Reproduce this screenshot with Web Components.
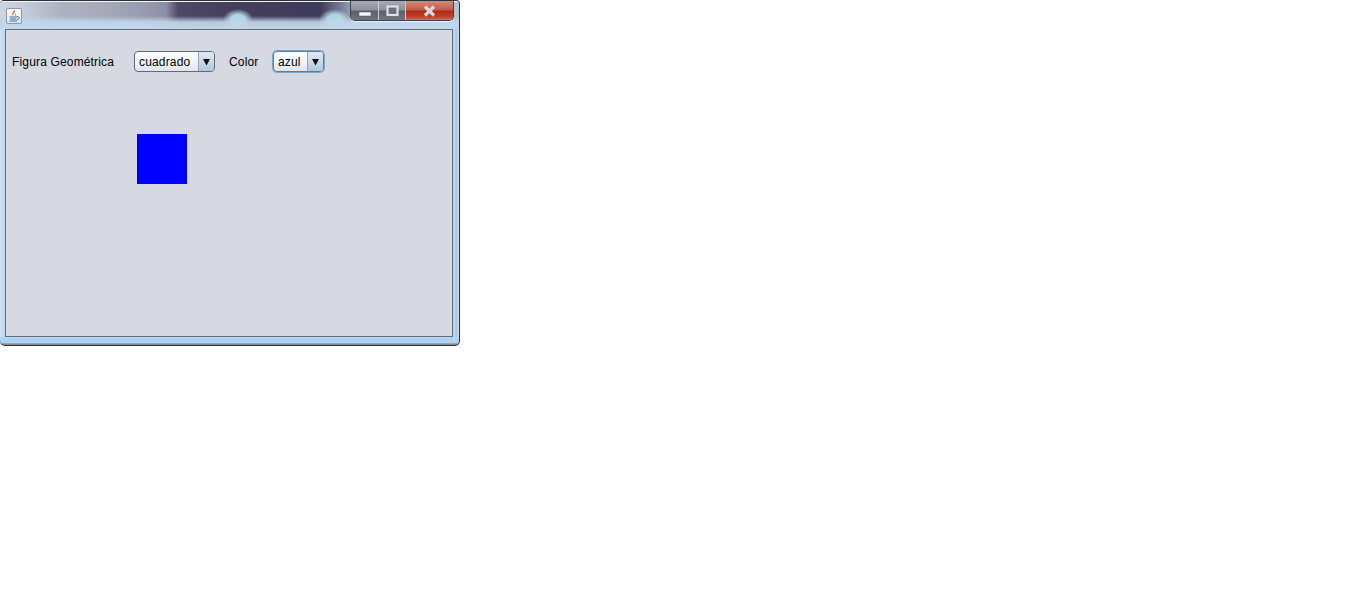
<!DOCTYPE html>
<html>
<head>
<meta charset="utf-8">
<title>Figura</title>
<style>
  html, body { margin: 0; background: #fff; }
  body { font-family: "Liberation Sans", Arial, sans-serif; font-size: 12px; letter-spacing: .16px; color: #000; }
</style>
</head>
<body>
<app-window>
  <combo-row>
    <span class="lbl" slot="first-label">Figura Geométrica</span>
    <combo-box slot="first" value="cuadrado" style="--combo-width:81px"></combo-box>
    <span class="lbl" slot="second-label">Color</span>
    <combo-box slot="second" value="azul" focused style="--combo-width:51px"></combo-box>
  </combo-row>
  <shape-canvas></shape-canvas>
</app-window>

<script>
class WindowButtons extends HTMLElement {
  constructor() {
    super();
    this.shadowDOM = this.attachShadow({ mode: "open" });
  }

  connectedCallback() {
    this.shadowDOM.innerHTML = `
      <style>
        :host {
          display: flex;
          width: 104px;
          height: 20px;
          box-sizing: border-box;
          border: 1px solid #3d4250;
          border-top: 0;
          border-radius: 0 0 5px 5px;
          overflow: hidden;
          box-shadow: 0 1px 0 rgba(255,255,255,.65);
        }
        .btn {
          display: flex;
          align-items: center;
          justify-content: center;
          box-sizing: border-box;
          height: 100%;
          background: linear-gradient(#a8aab4 0, #8f919d 45%, #5e606d 55%, #6f7280 100%);
        }
        .min { width: 28px; border-right: 1px solid #c9ccd6; }
        .max { width: 27px; border-right: 1px solid #c9ccd6; }
        .close { flex: 1; background: linear-gradient(#d08a7b 0, #c65c46 45%, #ad2e18 55%, #c24027 85%, #cf7660 100%); }
        svg { display: block; }
      </style>
      <div class="btn min">
        <svg width="12" height="12" viewBox="0 0 12 12"><rect x="0" y="7" width="12" height="4" fill="#f4f5f7" stroke="#4a4d5c" stroke-width=".5"/></svg>
      </div>
      <div class="btn max">
        <svg width="13" height="12" viewBox="0 0 13 12"><rect x="1.5" y="1.5" width="10" height="8.5" fill="#6d7080" stroke="#dfe1e7" stroke-width="2.2"/></svg>
      </div>
      <div class="btn close">
        <svg width="15" height="12" viewBox="0 0 15 12"><path d="M3 1.5 L12 10.5 M12 1.5 L3 10.5" stroke="#dcd9d8" stroke-width="3.2" fill="none"/></svg>
      </div>`;
  }
}

class AppWindow extends HTMLElement {
  constructor() {
    super();
    this.shadowDOM = this.attachShadow({ mode: "open" });
  }

  connectedCallback() {
    this.shadowDOM.innerHTML = `
      <style>
        :host {
          display: flex;
          flex-direction: column;
          box-sizing: border-box;
          width: 460px;
          height: 346px;
          padding: 0 6px 8px 5px;
          border: 1px solid #2c3038;
          border-width: 1px 1px 1px 0;
          border-radius: 4px 4px 5px 5px;
          background:
            linear-gradient(#b7d6f1 0, #a7cff3 5px, #c9d6df 6px, #6f7377 7px, #a3a5a7 8px) bottom / 100% 8px no-repeat,
            linear-gradient(90deg, #cfe2f2 0, #bcd7ef 5px, transparent 5px) left / 5px 100% no-repeat,
            linear-gradient(90deg, #c9d5df 0, #a9c8e6 4px, #cfe4f8 6px) right / 6px 100% no-repeat,
            #c4d8ea;
          overflow: hidden;
        }
        .title {
          display: flex;
          align-items: flex-start;
          justify-content: space-between;
          height: 28px;
          margin: 0 -6px 0 -5px;
          padding: 0 6px;
          flex: none;
          border-top: 1px solid #f2f4f7;
          box-sizing: border-box;
          background:
            linear-gradient(rgba(194,215,235,0) 0, rgba(194,215,235,0) 52%, rgba(194,215,235,.9) 74%, #c0d7ec 100%),
            radial-gradient(ellipse 15px 10px at 238px 17px, #b0d4e4 0, #b0d4e4 45%, rgba(176,212,228,0) 100%),
            radial-gradient(ellipse 16px 10px at 335px 17px, #b0d4e4 0, #b0d4e4 45%, rgba(176,212,228,0) 100%),
            linear-gradient(90deg, #ccd5e0 0, #c4ccd9 24px, #aeb3c2 60px, #a6aabb 100px, #9a9db1 140px, #8e8ea6 166px, #4f4966 178px, #443f5d 230px, #3f3b5a 320px, #7b7e96 342px, #b0c4d4 360px, #b0c4d4 460px);
        }
        .icon {
          box-sizing: border-box;
          width: 16px;
          height: 16px;
          margin-top: 6px;
          border: 1px solid #8d97a5;
          border-radius: 2px;
          background: linear-gradient(#fdfdfd, #dfe5ec);
          flex: none;
        }
        .icon svg { display: block; }
        window-buttons { margin-top: -1px; margin-right: -1px; }
        .panel {
          flex: 1;
          box-sizing: border-box;
          border: 1px solid #5e6f82;
          background: #d6d9e2;
          display: flex;
          flex-direction: column;
          min-height: 0;
        }
      </style>
      <div class="title">
        <div class="icon">
          <svg width="14" height="14" viewBox="0 0 14 14">
            <path d="M7.5 1 C9.5 3 5 4.5 6.5 7 C5 6 4.5 4 7.5 1 Z M9 4 C9.5 5 8 6 8.5 7.5 C7.5 6.5 8 5 9 4 Z" fill="#e0661c"/>
            <path d="M2.5 8 H10 M3 10 H9.5 M2.5 12 H10" stroke="#44709f" stroke-width="1" fill="none"/>
            <path d="M10 7.5 C13 7.5 13 10.5 10 10.5" stroke="#44709f" stroke-width="1" fill="none"/>
          </svg>
        </div>
        <window-buttons></window-buttons>
      </div>
      <div class="panel"><slot></slot></div>`;
  }
}

class ComboRow extends HTMLElement {
  constructor() {
    super();
    this.shadowDOM = this.attachShadow({ mode: "open" });
  }

  connectedCallback() {
    this.shadowDOM.innerHTML = `
      <style>
        :host {
          display: flex;
          align-items: center;
          height: 21px;
          margin-top: 21px;
          padding-left: 6px;
        }
        ::slotted([slot="first-label"]) { width: 122px; }
        ::slotted([slot="second-label"]) { width: 44px; margin-left: 14px; }
      </style>
      <slot name="first-label"></slot>
      <slot name="first"></slot>
      <slot name="second-label"></slot>
      <slot name="second"></slot>`;
  }
}

class ComboBox extends HTMLElement {
  constructor() {
    super();
    this.shadowDOM = this.attachShadow({ mode: "open" });
  }

  connectedCallback() {
    this.shadowDOM.innerHTML = `
      <style>
        :host {
          display: flex;
          box-sizing: border-box;
          width: var(--combo-width, 80px);
          height: 21px;
          border: 1px solid #5b6b80;
          border-radius: 4px;
          background: linear-gradient(#fdfefe 0, #f1f4f8 55%, #dfe5ec 100%);
          overflow: hidden;
        }
        :host([focused]) {
          box-shadow: 0 0 0 1px #7ba5cb;
          border-color: #4f80ad;
        }
        .value {
          flex: 1;
          padding-left: 4px;
          line-height: 20px;
          white-space: nowrap;
        }
        .arrow {
          display: flex;
          align-items: center;
          justify-content: center;
          width: 16px;
          box-sizing: border-box;
          border-left: 1px solid #93a4b7;
          background: linear-gradient(#e2e9f0 0, #cad7e4 55%, #b2c7db 100%);
        }
        svg { display: block; }
      </style>
      <div class="value">${this.getAttribute("value")}</div>
      <div class="arrow">
        <svg width="9" height="8" viewBox="0 0 9 8"><path d="M1 1 H8 L4.5 7.5 Z" fill="#111"/></svg>
      </div>`;
  }
}

class ShapeCanvas extends HTMLElement {
  constructor() {
    super();
    this.shadowDOM = this.attachShadow({ mode: "open" });
  }

  connectedCallback() {
    this.shadowDOM.innerHTML = `
      <style>
        :host { display: block; padding: 62px 0 0 131px; }
        .shape { width: 50px; height: 50px; background: #0000ff; }
      </style>
      <div class="shape"></div>`;
  }
}

customElements.define("window-buttons", WindowButtons);
customElements.define("app-window", AppWindow);
customElements.define("combo-row", ComboRow);
customElements.define("combo-box", ComboBox);
customElements.define("shape-canvas", ShapeCanvas);
</script>
</body>
</html>
